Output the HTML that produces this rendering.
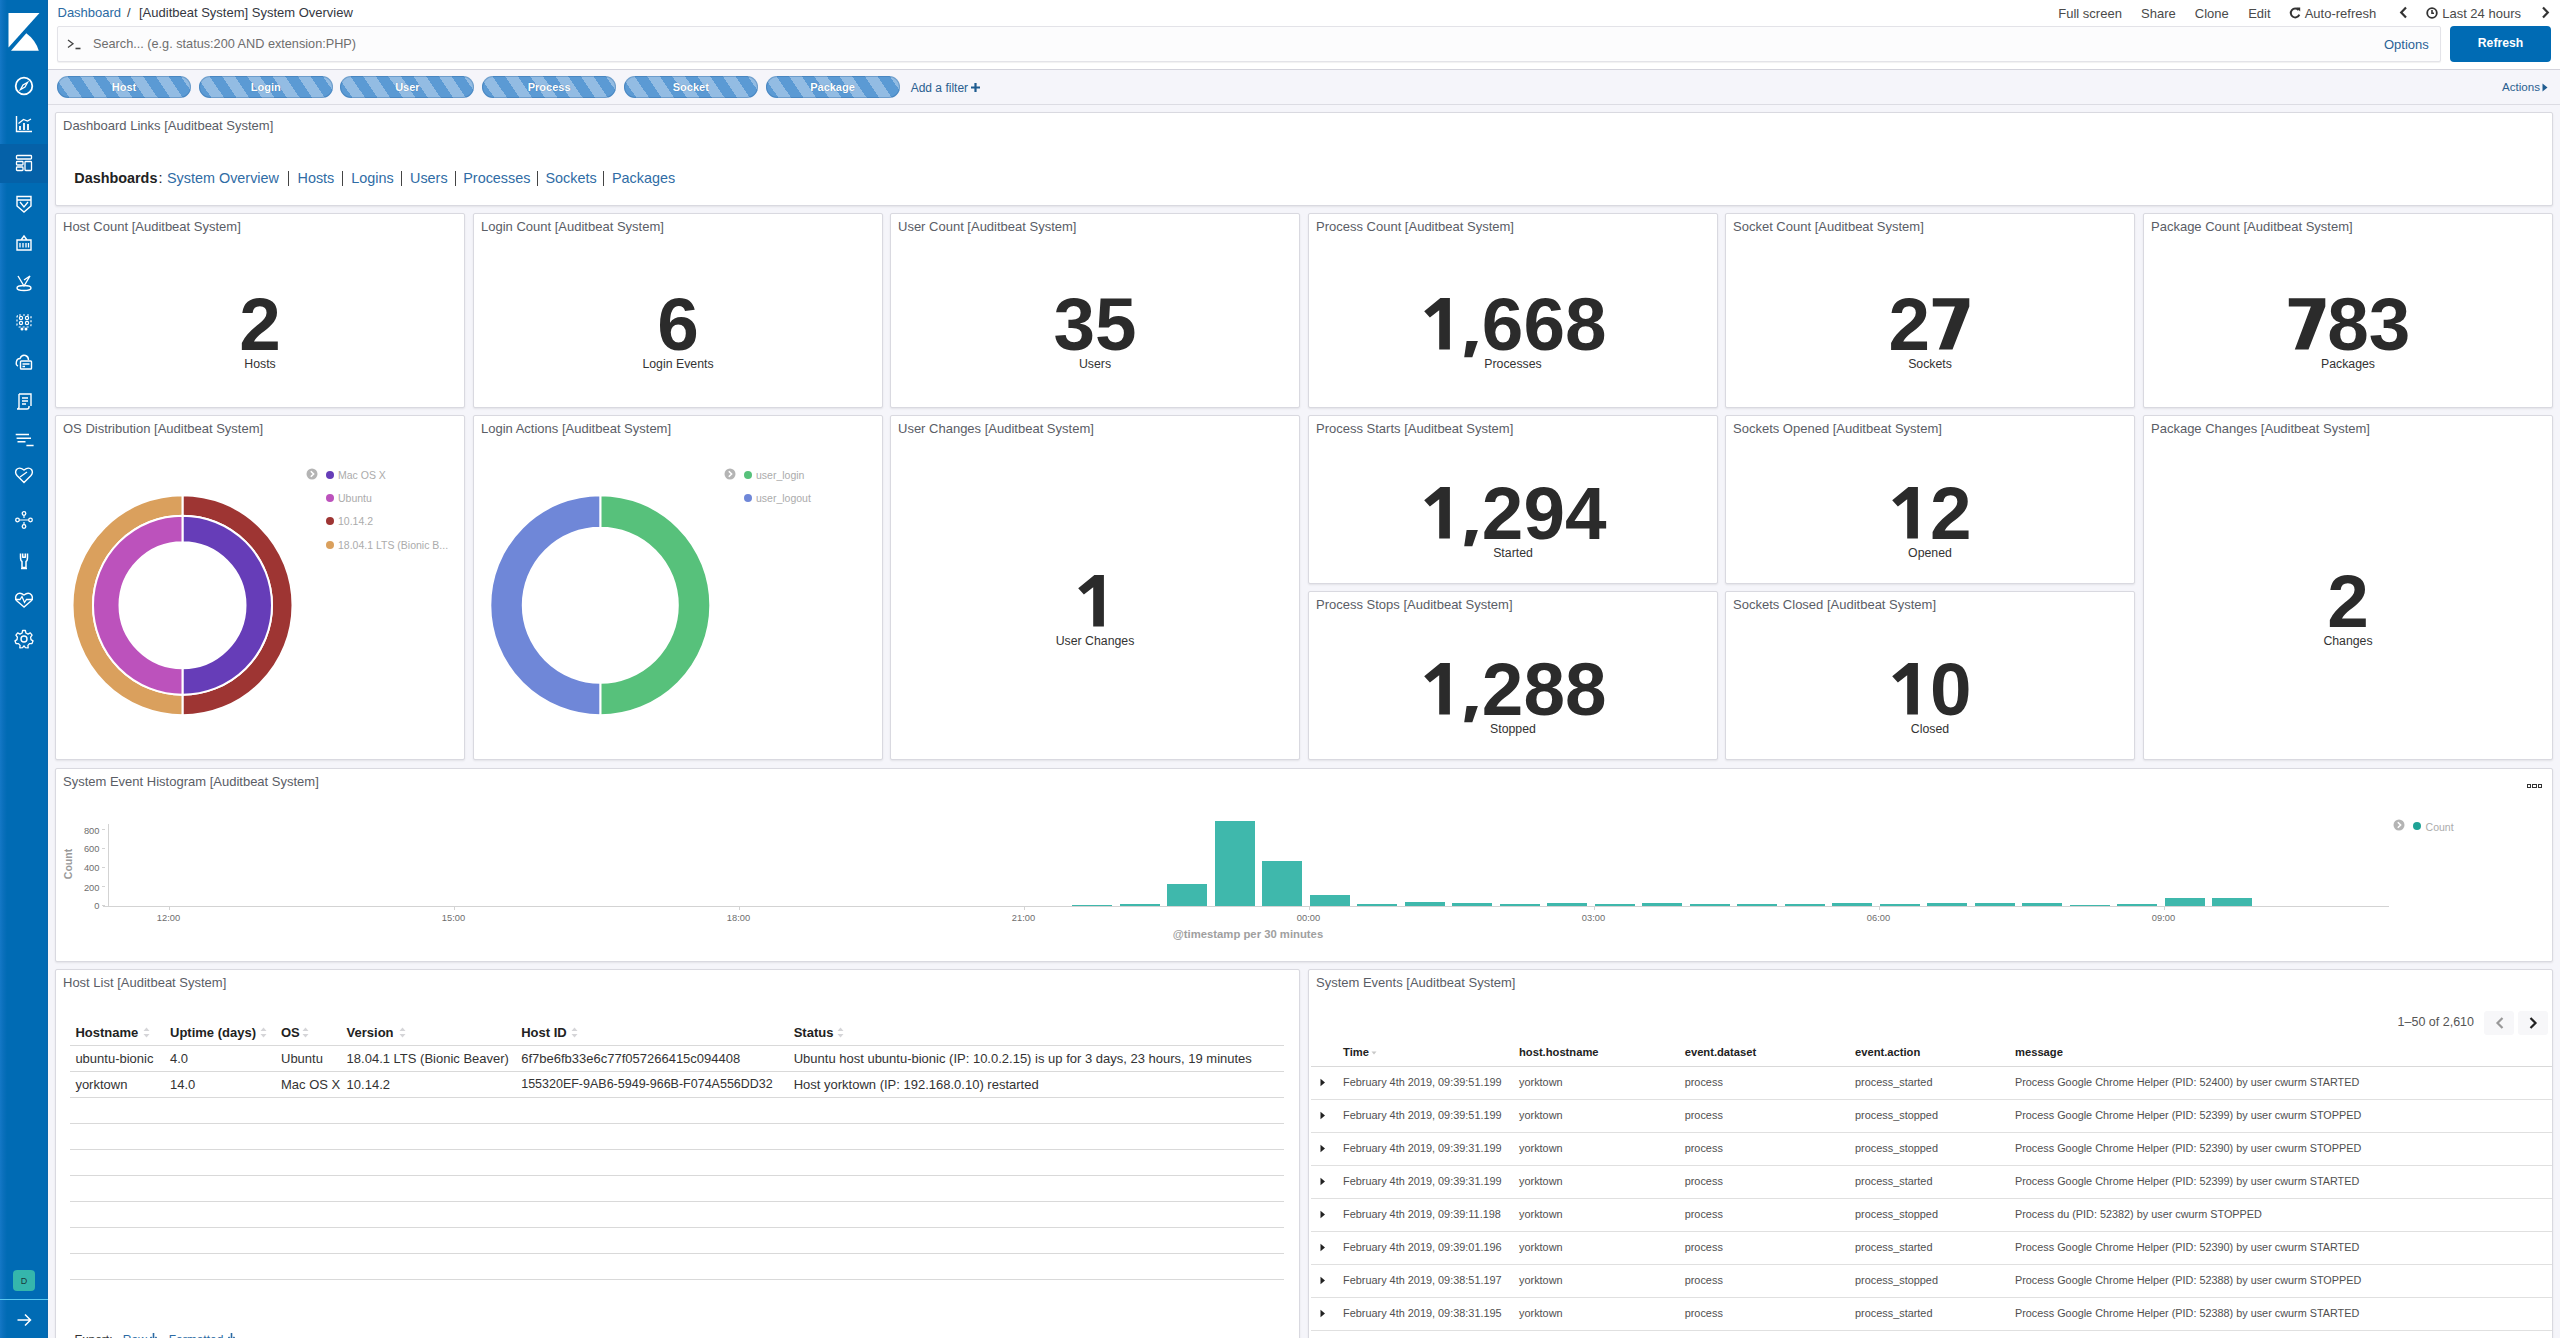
<!DOCTYPE html>
<html><head><meta charset="utf-8">
<style>
html,body{margin:0;padding:0;}
body{width:2560px;height:1338px;overflow:hidden;position:relative;background:#F5F5FA;font-family:"Liberation Sans", sans-serif;}
.t{position:absolute;white-space:nowrap;line-height:1;}
.r{position:absolute;box-sizing:border-box;}
.panel{position:absolute;box-sizing:border-box;background:#fff;border:1px solid #D9D9E0;border-radius:2px;box-shadow:0 1px 2px rgba(0,0,0,0.08);}
svg{position:absolute;overflow:visible;}
</style></head><body>
<div class="r" style="left:48px;top:0px;width:2512px;height:69px;background:#FFFFFF;"></div><div class="r" style="left:48px;top:69px;width:2512px;height:1px;background:#D3D3DC;"></div><div class="r" style="left:48px;top:70px;width:2512px;height:34px;background:#F5F5FA;"></div><div class="r" style="left:48px;top:104px;width:2512px;height:1px;background:#DCDCE3;"></div><div class="t" style="left:57.5px;top:6.00px;font-size:13px;font-weight:400;color:#2B6AA3;">Dashboard</div><div class="t" style="left:127px;top:6.00px;font-size:13px;font-weight:400;color:#343741;">/</div><div class="t" style="left:139px;top:6.00px;font-size:13px;font-weight:400;color:#343741;">[Auditbeat System] System Overview</div><div class="t" style="left:2058.3px;top:7.00px;font-size:13px;font-weight:400;color:#4A4A4A;">Full screen</div><div class="t" style="left:2141px;top:7.00px;font-size:13px;font-weight:400;color:#4A4A4A;">Share</div><div class="t" style="left:2194.8px;top:7.00px;font-size:13px;font-weight:400;color:#4A4A4A;">Clone</div><div class="t" style="left:2248.2px;top:7.00px;font-size:13px;font-weight:400;color:#4A4A4A;">Edit</div><svg style="left:2289px;top:7px" width="12" height="12" viewBox="0 0 12 12"><path d="M9.6 3.2 A4.4 4.4 0 1 0 10.3 7.6" fill="none" stroke="#333" stroke-width="2"/><path d="M7.2 0.6 L11.2 0.6 L11.2 4.6 Z" fill="#333"/></svg><div class="t" style="left:2304.7px;top:7.00px;font-size:13px;font-weight:400;color:#4A4A4A;">Auto-refresh</div><svg style="left:2399px;top:6px" width="9" height="13" viewBox="0 0 9 13"><path d="M7 1.5 L2.2 6.5 L7 11.5" fill="none" stroke="#333" stroke-width="2.2"/></svg><svg style="left:2426px;top:6.5px" width="12" height="12" viewBox="0 0 12 12"><circle cx="6" cy="6" r="4.8" fill="none" stroke="#333" stroke-width="1.8"/><path d="M6 3 V6.3 H8" fill="none" stroke="#333" stroke-width="1.6"/></svg><div class="t" style="left:2442.2px;top:7.00px;font-size:13px;font-weight:400;color:#4A4A4A;">Last 24 hours</div><svg style="left:2540.5px;top:5.5px" width="9" height="13" viewBox="0 0 9 13"><path d="M2 1.5 L6.8 6.5 L2 11.5" fill="none" stroke="#333" stroke-width="2.2"/></svg><div class="r" style="left:57px;top:26px;width:2384px;height:36px;background:#FCFCFD;border:1px solid #E3E3E8;border-radius:2px;box-shadow:0 1px 1px rgba(0,0,0,0.06);"></div><svg style="left:67px;top:39px" width="15" height="11" viewBox="0 0 15 11"><path d="M1 1 L6 4.8 L1 8.6" fill="none" stroke="#444" stroke-width="1.3"/><path d="M8.5 9.5 H13.5" stroke="#444" stroke-width="1.6"/></svg><div class="t" style="left:93px;top:37.95px;font-size:12.7px;font-weight:400;color:#6E6E6E;">Search... (e.g. status:200 AND extension:PHP)</div><div class="t" style="left:2384px;top:38.00px;font-size:13px;font-weight:400;color:#2B6296;">Options</div><div class="r" style="left:2450px;top:26px;width:101px;height:36px;background:#006BB4;border-radius:4px;"></div><div class="t" style="left:1900.5px;width:1200px;text-align:center;top:37.37px;font-size:12.2px;font-weight:700;color:#FFFFFF;">Refresh</div><div class="r" style="left:57.0px;top:76px;width:134px;height:22px;border-radius:11px;background:repeating-linear-gradient(56deg,#5B9AD4 0px,#5B9AD4 10.4px,#93BCE3 10.4px,#93BCE3 20.9px);box-shadow:inset 0 0 0 1px rgba(40,100,160,0.35);"></div><div class="t" style="left:-476.0px;width:1200px;text-align:center;top:82.19px;font-size:11px;font-weight:700;color:#FFFFFF;text-shadow:0 0 1px rgba(0,60,120,0.5);">Host</div><div class="r" style="left:198.7px;top:76px;width:134px;height:22px;border-radius:11px;background:repeating-linear-gradient(56deg,#5B9AD4 0px,#5B9AD4 10.4px,#93BCE3 10.4px,#93BCE3 20.9px);box-shadow:inset 0 0 0 1px rgba(40,100,160,0.35);"></div><div class="t" style="left:-334.3px;width:1200px;text-align:center;top:82.19px;font-size:11px;font-weight:700;color:#FFFFFF;text-shadow:0 0 1px rgba(0,60,120,0.5);">Login</div><div class="r" style="left:340.4px;top:76px;width:134px;height:22px;border-radius:11px;background:repeating-linear-gradient(56deg,#5B9AD4 0px,#5B9AD4 10.4px,#93BCE3 10.4px,#93BCE3 20.9px);box-shadow:inset 0 0 0 1px rgba(40,100,160,0.35);"></div><div class="t" style="left:-192.60000000000002px;width:1200px;text-align:center;top:82.19px;font-size:11px;font-weight:700;color:#FFFFFF;text-shadow:0 0 1px rgba(0,60,120,0.5);">User</div><div class="r" style="left:482.1px;top:76px;width:134px;height:22px;border-radius:11px;background:repeating-linear-gradient(56deg,#5B9AD4 0px,#5B9AD4 10.4px,#93BCE3 10.4px,#93BCE3 20.9px);box-shadow:inset 0 0 0 1px rgba(40,100,160,0.35);"></div><div class="t" style="left:-50.90000000000009px;width:1200px;text-align:center;top:82.19px;font-size:11px;font-weight:700;color:#FFFFFF;text-shadow:0 0 1px rgba(0,60,120,0.5);">Process</div><div class="r" style="left:623.8px;top:76px;width:134px;height:22px;border-radius:11px;background:repeating-linear-gradient(56deg,#5B9AD4 0px,#5B9AD4 10.4px,#93BCE3 10.4px,#93BCE3 20.9px);box-shadow:inset 0 0 0 1px rgba(40,100,160,0.35);"></div><div class="t" style="left:90.79999999999995px;width:1200px;text-align:center;top:82.19px;font-size:11px;font-weight:700;color:#FFFFFF;text-shadow:0 0 1px rgba(0,60,120,0.5);">Socket</div><div class="r" style="left:765.5px;top:76px;width:134px;height:22px;border-radius:11px;background:repeating-linear-gradient(56deg,#5B9AD4 0px,#5B9AD4 10.4px,#93BCE3 10.4px,#93BCE3 20.9px);box-shadow:inset 0 0 0 1px rgba(40,100,160,0.35);"></div><div class="t" style="left:232.5px;width:1200px;text-align:center;top:82.19px;font-size:11px;font-weight:700;color:#FFFFFF;text-shadow:0 0 1px rgba(0,60,120,0.5);">Package</div><div class="t" style="left:910.7px;top:81.84px;font-size:12px;font-weight:400;color:#2B5F90;">Add a filter</div><svg style="left:971px;top:82.5px" width="9" height="9" viewBox="0 0 9 9"><path d="M4.5 0 V9 M0 4.5 H9" stroke="#1F5C90" stroke-width="2.2"/></svg><div class="t" style="left:2502px;top:80.88px;font-size:11.6px;font-weight:400;color:#2B5F90;">Actions</div><svg style="left:2542px;top:82.5px" width="6" height="9" viewBox="0 0 6 9"><path d="M0.5 0.5 L5.5 4.5 L0.5 8.5 Z" fill="#1F5C90"/></svg><div class="r" style="left:0px;top:0px;width:48px;height:1338px;background:linear-gradient(90deg,#1478C6 0px,#0B70BC 3px,#006BB4 7px,#006BB4 46px,#0A64A8 48px);"></div><div class="r" style="left:0px;top:144px;width:48px;height:38.5px;background:#0561A8;"></div><svg style="left:0;top:0" width="48" height="56" viewBox="0 0 48 56"><path d="M8.5 13 H39.5 L8.5 47.5 Z" fill="#fff"/><path d="M11 50.8 L26.3 33.3 Q35.5 40 38.8 50.8 Z" fill="#fff"/></svg><svg style="left:14px;top:75.5px" width="20" height="20" viewBox="0 0 20 20"><circle cx="10" cy="10" r="8.3" fill="none" stroke="#fff" stroke-width="1.8"/><path d="M13.5 6.5 L11 11 L6.5 13.5 L9 9 Z" fill="none" stroke="#fff" stroke-width="1.3"/></svg><svg style="left:14px;top:113.5px" width="20" height="20" viewBox="0 0 20 20"><path d="M2.5 2 V17.5 H18" fill="none" stroke="#fff" stroke-width="1.4"/><path d="M4.5 9.5 L9.5 5.5 L13.5 7 L17 5" fill="none" stroke="#fff" stroke-width="1.3"/><path d="M6 12 V16 M10 9 V16 M14 10 V16" stroke="#fff" stroke-width="1.8"/></svg><svg style="left:14px;top:153px" width="20" height="20" viewBox="0 0 20 20"><rect x="2.5" y="2.5" width="15" height="3.5" rx="0.8" fill="none" stroke="#fff" stroke-width="1.3"/><rect x="2.5" y="8.5" width="6.5" height="3.5" rx="0.8" fill="none" stroke="#fff" stroke-width="1.3"/><rect x="2.5" y="14" width="6.5" height="3.5" rx="0.8" fill="none" stroke="#fff" stroke-width="1.3"/><rect x="11" y="8.5" width="6.5" height="9" rx="0.8" fill="none" stroke="#fff" stroke-width="1.3"/></svg><svg style="left:14px;top:193.5px" width="20" height="20" viewBox="0 0 20 20"><path d="M3 2.5 H17 V12 L10 18 L3 12 Z" fill="none" stroke="#fff" stroke-width="1.4"/><path d="M3 6 H17 M6 8 L10 13 L14 8" fill="none" stroke="#fff" stroke-width="1.3"/></svg><svg style="left:14px;top:232.5px" width="20" height="20" viewBox="0 0 20 20"><path d="M3 7 H17 V17 H3 Z M7 7 L10 3 L13 7" fill="none" stroke="#fff" stroke-width="1.4"/><path d="M6 10 V14.5 M9 10 V14.5 M12 10 V14.5 M14.5 10 V14.5" stroke="#fff" stroke-width="1.3"/></svg><svg style="left:14px;top:273px" width="20" height="20" viewBox="0 0 20 20"><path d="M4 3 L10 13 L16 3 L10 7" fill="none" stroke="#fff" stroke-width="1.4"/><ellipse cx="10" cy="15" rx="7" ry="2.5" fill="none" stroke="#fff" stroke-width="1.4"/></svg><svg style="left:14px;top:311.5px" width="20" height="20" viewBox="0 0 20 20"><rect x="3" y="3" width="14" height="12" rx="2" fill="none" stroke="#fff" stroke-width="1.2" stroke-dasharray="2 2"/><circle cx="7" cy="6" r="1.6" fill="none" stroke="#fff" stroke-width="1.2"/><circle cx="13" cy="6" r="1.6" fill="none" stroke="#fff" stroke-width="1.2"/><circle cx="7" cy="11" r="1.6" fill="none" stroke="#fff" stroke-width="1.2"/><circle cx="13" cy="11" r="1.6" fill="none" stroke="#fff" stroke-width="1.2"/><circle cx="8" cy="17" r="1.5" fill="#fff"/><circle cx="12" cy="17" r="1.5" fill="#fff"/></svg><svg style="left:14px;top:352px" width="20" height="20" viewBox="0 0 20 20"><path d="M4 14 Q1.5 13 2.5 9.5 Q3 6.5 6 6.5 Q7.5 2.5 11.5 3.5 Q14.5 4.5 14.5 8" fill="none" stroke="#fff" stroke-width="1.4"/><rect x="6.5" y="9" width="11" height="8" rx="0.8" fill="none" stroke="#fff" stroke-width="1.4"/><path d="M8.5 12 H15.5 M8.5 14.5 H11" stroke="#fff" stroke-width="1.3"/></svg><svg style="left:14px;top:390.5px" width="20" height="20" viewBox="0 0 20 20"><path d="M5 3 H17 V15 M5 3 V16 Q5 18 3 18 H13 Q15 18 15 16 V15" fill="none" stroke="#fff" stroke-width="1.4"/><path d="M8 7 H14 M8 10 H14 M8 13 H12" stroke="#fff" stroke-width="1.3"/></svg><svg style="left:14px;top:430px" width="20" height="20" viewBox="0 0 20 20"><path d="M1.7 4.5 H15 M2.6 8.2 H17 M3.5 11.8 H11.5 M12.4 15.5 H19.6" stroke="#fff" stroke-width="1.6"/></svg><svg style="left:14px;top:465px" width="20" height="20" viewBox="0 0 20 20"><path d="M10 17.5 L3 10.5 Q0.5 7.5 2.5 4.5 Q5.5 1.5 10 5 Q14.5 1.5 17.5 4.5 Q19.5 7.5 17 10.5 Z" fill="none" stroke="#fff" stroke-width="1.4"/><path d="M6 12 L13 7" stroke="#fff" stroke-width="1.2"/></svg><svg style="left:14px;top:509.5px" width="20" height="20" viewBox="0 0 20 20"><circle cx="10" cy="3.5" r="1.8" fill="none" stroke="#fff" stroke-width="1.3"/><circle cx="3.5" cy="10" r="1.8" fill="none" stroke="#fff" stroke-width="1.3"/><circle cx="16.5" cy="10" r="1.8" fill="none" stroke="#fff" stroke-width="1.3"/><circle cx="10" cy="16.5" r="1.8" fill="none" stroke="#fff" stroke-width="1.3"/><path d="M5.3 10 H14.7 M10 5.3 V8 M10 12 V14.7" stroke="#fff" stroke-width="1.2"/></svg><svg style="left:14px;top:550.5px" width="20" height="20" viewBox="0 0 20 20"><path d="M6.5 2.5 V6 Q6.5 9.8 8 10.5 V16.5 H12 V10.5 Q13.5 9.8 13.5 6 V2.5 M8.7 2.5 V6.3 H11.3 V2.5" fill="none" stroke="#fff" stroke-width="1.5" stroke-linejoin="round"/><path d="M7 17.5 H13" stroke="#fff" stroke-width="1.5"/></svg><svg style="left:14px;top:589.5px" width="20" height="20" viewBox="0 0 20 20"><path d="M10 17 L3 11 Q0.5 8 2.5 5 Q5.5 1.5 10 5 Q14.5 1.5 17.5 5 Q19.5 8 17 11 Z" fill="none" stroke="#fff" stroke-width="1.4"/><path d="M1 9.5 H6 L8 6.5 L10.5 12.5 L12.5 9.5 H19" fill="none" stroke="#fff" stroke-width="1.3"/></svg><svg style="left:14px;top:629px" width="20" height="20" viewBox="0 0 20 20"><circle cx="10" cy="10" r="3" fill="none" stroke="#fff" stroke-width="1.4"/><path d="M8.6 1.5 H11.4 L11.9 4 L14 5.1 L16.3 3.9 L18.1 6.1 L16.6 8.2 L17 10.6 L19 11.9 L18 14.6 L15.5 14.6 L13.9 16.4 L14.2 18.8 L11.4 18.6 L10 16.8 L8.6 18.6 L5.8 18.8 L6.1 16.4 L4.5 14.6 L2 14.6 L1 11.9 L3 10.6 L3.4 8.2 L1.9 6.1 L3.7 3.9 L6 5.1 L8.1 4 Z" fill="none" stroke="#fff" stroke-width="1.3" stroke-linejoin="round"/></svg><div class="r" style="left:13px;top:1270px;width:22px;height:21px;background:#35B6AC;border-radius:4px;"></div><div class="t" style="left:-576px;width:1200px;text-align:center;top:1277.38px;font-size:9px;font-weight:400;color:#1a3a3a;">D</div><div class="r" style="left:0px;top:1299px;width:48px;height:1px;background:#5BC8F0;"></div><svg style="left:14px;top:1309.5px" width="20" height="20" viewBox="0 0 20 20"><path d="M3.5 10 H16.5 M11 4.5 L16.5 10 L11 15.5" fill="none" stroke="#fff" stroke-width="1.5"/></svg><div class="panel" style="left:55px;top:112px;width:2498px;height:94px;"></div><div class="t" style="left:63px;top:118.70px;font-size:13px;font-weight:400;color:#5A5D66;">Dashboard Links [Auditbeat System]</div><div class="t" style="left:74.25px;top:170.71px;font-size:14.4px;font-weight:700;color:#222;">Dashboards</div><div class="t" style="left:158.5px;top:170.71px;font-size:14.4px;font-weight:400;color:#222;">:</div><div class="t" style="left:167px;top:170.71px;font-size:14.4px;font-weight:400;color:#2F6CA5;">System Overview</div><div class="t" style="left:297.5px;top:170.71px;font-size:14.4px;font-weight:400;color:#2F6CA5;">Hosts</div><div class="t" style="left:351.25px;top:170.71px;font-size:14.4px;font-weight:400;color:#2F6CA5;">Logins</div><div class="t" style="left:410px;top:170.71px;font-size:14.4px;font-weight:400;color:#2F6CA5;">Users</div><div class="t" style="left:463.25px;top:170.71px;font-size:14.4px;font-weight:400;color:#2F6CA5;">Processes</div><div class="t" style="left:545.5px;top:170.71px;font-size:14.4px;font-weight:400;color:#2F6CA5;">Sockets</div><div class="t" style="left:612px;top:170.71px;font-size:14.4px;font-weight:400;color:#2F6CA5;">Packages</div><div class="r" style="left:288.25px;top:171px;width:1px;height:15px;background:#444;"></div><div class="r" style="left:342.0px;top:171px;width:1px;height:15px;background:#444;"></div><div class="r" style="left:400.75px;top:171px;width:1px;height:15px;background:#444;"></div><div class="r" style="left:454.5px;top:171px;width:1px;height:15px;background:#444;"></div><div class="r" style="left:537.0px;top:171px;width:1px;height:15px;background:#444;"></div><div class="r" style="left:603.25px;top:171px;width:1px;height:15px;background:#444;"></div><div class="panel" style="left:55px;top:213px;width:410px;height:195px;"></div><div class="t" style="left:63px;top:219.70px;font-size:13px;font-weight:400;color:#5A5D66;">Host Count [Auditbeat System]</div><div class="t" style="left:-340.0px;width:1200px;text-align:center;top:287.27px;font-size:74.7px;font-weight:700;color:#2B2B2B;">2</div><div class="t" style="left:-340.0px;width:1200px;text-align:center;top:357.59px;font-size:12.3px;font-weight:400;color:#333333;">Hosts</div><div class="panel" style="left:473px;top:213px;width:410px;height:195px;"></div><div class="t" style="left:481px;top:219.70px;font-size:13px;font-weight:400;color:#5A5D66;">Login Count [Auditbeat System]</div><div class="t" style="left:78.0px;width:1200px;text-align:center;top:287.27px;font-size:74.7px;font-weight:700;color:#2B2B2B;">6</div><div class="t" style="left:78.0px;width:1200px;text-align:center;top:357.59px;font-size:12.3px;font-weight:400;color:#333333;">Login Events</div><div class="panel" style="left:890px;top:213px;width:410px;height:195px;"></div><div class="t" style="left:898px;top:219.70px;font-size:13px;font-weight:400;color:#5A5D66;">User Count [Auditbeat System]</div><div class="t" style="left:495.0px;width:1200px;text-align:center;top:287.27px;font-size:74.7px;font-weight:700;color:#2B2B2B;">35</div><div class="t" style="left:495.0px;width:1200px;text-align:center;top:357.59px;font-size:12.3px;font-weight:400;color:#333333;">Users</div><div class="panel" style="left:1308px;top:213px;width:410px;height:195px;"></div><div class="t" style="left:1316px;top:219.70px;font-size:13px;font-weight:400;color:#5A5D66;">Process Count [Auditbeat System]</div><div class="t" style="left:913.0px;width:1200px;text-align:center;top:287.27px;font-size:74.7px;font-weight:700;color:#2B2B2B;"><span style="position:relative;color:transparent">1<svg style="left:0;top:15.6px" width="42" height="52" viewBox="0 0 42 52"><path d="M29.9 0 V51.5 H19.2 V12.3 L9.9 19.6 L4.2 13.3 L20.4 0 Z" fill="#2B2B2B"/></svg></span><span style="position:relative;color:transparent">,<svg style="left:0;top:0" width="21" height="80" viewBox="0 0 21 80"><path d="M5.6 59 H16.9 L11.3 75.3 H3.2 Z" fill="#2B2B2B"/></svg></span>668</div><div class="t" style="left:913.0px;width:1200px;text-align:center;top:357.59px;font-size:12.3px;font-weight:400;color:#333333;">Processes</div><div class="panel" style="left:1725px;top:213px;width:410px;height:195px;"></div><div class="t" style="left:1733px;top:219.70px;font-size:13px;font-weight:400;color:#5A5D66;">Socket Count [Auditbeat System]</div><div class="t" style="left:1330.0px;width:1200px;text-align:center;top:287.27px;font-size:74.7px;font-weight:700;color:#2B2B2B;">2<span style="position:relative;color:transparent">7<svg style="left:0;top:15.6px" width="42" height="52" viewBox="0 0 42 52"><path d="M2.8 0.3 H39.3 V8.5 L22.5 51.5 H8.8 L24.9 8.5 H2.8 Z" fill="#2B2B2B"/></svg></span></div><div class="t" style="left:1330.0px;width:1200px;text-align:center;top:357.59px;font-size:12.3px;font-weight:400;color:#333333;">Sockets</div><div class="panel" style="left:2143px;top:213px;width:410px;height:195px;"></div><div class="t" style="left:2151px;top:219.70px;font-size:13px;font-weight:400;color:#5A5D66;">Package Count [Auditbeat System]</div><div class="t" style="left:1748.0px;width:1200px;text-align:center;top:287.27px;font-size:74.7px;font-weight:700;color:#2B2B2B;"><span style="position:relative;color:transparent">7<svg style="left:0;top:15.6px" width="42" height="52" viewBox="0 0 42 52"><path d="M2.8 0.3 H39.3 V8.5 L22.5 51.5 H8.8 L24.9 8.5 H2.8 Z" fill="#2B2B2B"/></svg></span>83</div><div class="t" style="left:1748.0px;width:1200px;text-align:center;top:357.59px;font-size:12.3px;font-weight:400;color:#333333;">Packages</div><div class="panel" style="left:890px;top:415px;width:410px;height:345px;"></div><div class="t" style="left:898px;top:421.70px;font-size:13px;font-weight:400;color:#5A5D66;">User Changes [Auditbeat System]</div><div class="t" style="left:495.0px;width:1200px;text-align:center;top:564.27px;font-size:74.7px;font-weight:700;color:#2B2B2B;"><span style="position:relative;color:transparent">1<svg style="left:0;top:15.6px" width="42" height="52" viewBox="0 0 42 52"><path d="M29.9 0 V51.5 H19.2 V12.3 L9.9 19.6 L4.2 13.3 L20.4 0 Z" fill="#2B2B2B"/></svg></span></div><div class="t" style="left:495.0px;width:1200px;text-align:center;top:634.59px;font-size:12.3px;font-weight:400;color:#333333;">User Changes</div><div class="panel" style="left:1308px;top:415px;width:410px;height:169px;"></div><div class="t" style="left:1316px;top:421.70px;font-size:13px;font-weight:400;color:#5A5D66;">Process Starts [Auditbeat System]</div><div class="t" style="left:913.0px;width:1200px;text-align:center;top:476.27px;font-size:74.7px;font-weight:700;color:#2B2B2B;"><span style="position:relative;color:transparent">1<svg style="left:0;top:15.6px" width="42" height="52" viewBox="0 0 42 52"><path d="M29.9 0 V51.5 H19.2 V12.3 L9.9 19.6 L4.2 13.3 L20.4 0 Z" fill="#2B2B2B"/></svg></span><span style="position:relative;color:transparent">,<svg style="left:0;top:0" width="21" height="80" viewBox="0 0 21 80"><path d="M5.6 59 H16.9 L11.3 75.3 H3.2 Z" fill="#2B2B2B"/></svg></span>294</div><div class="t" style="left:913.0px;width:1200px;text-align:center;top:546.59px;font-size:12.3px;font-weight:400;color:#333333;">Started</div><div class="panel" style="left:1725px;top:415px;width:410px;height:169px;"></div><div class="t" style="left:1733px;top:421.70px;font-size:13px;font-weight:400;color:#5A5D66;">Sockets Opened [Auditbeat System]</div><div class="t" style="left:1330.0px;width:1200px;text-align:center;top:476.27px;font-size:74.7px;font-weight:700;color:#2B2B2B;"><span style="position:relative;color:transparent">1<svg style="left:0;top:15.6px" width="42" height="52" viewBox="0 0 42 52"><path d="M29.9 0 V51.5 H19.2 V12.3 L9.9 19.6 L4.2 13.3 L20.4 0 Z" fill="#2B2B2B"/></svg></span>2</div><div class="t" style="left:1330.0px;width:1200px;text-align:center;top:546.59px;font-size:12.3px;font-weight:400;color:#333333;">Opened</div><div class="panel" style="left:1308px;top:591px;width:410px;height:169px;"></div><div class="t" style="left:1316px;top:597.70px;font-size:13px;font-weight:400;color:#5A5D66;">Process Stops [Auditbeat System]</div><div class="t" style="left:913.0px;width:1200px;text-align:center;top:652.27px;font-size:74.7px;font-weight:700;color:#2B2B2B;"><span style="position:relative;color:transparent">1<svg style="left:0;top:15.6px" width="42" height="52" viewBox="0 0 42 52"><path d="M29.9 0 V51.5 H19.2 V12.3 L9.9 19.6 L4.2 13.3 L20.4 0 Z" fill="#2B2B2B"/></svg></span><span style="position:relative;color:transparent">,<svg style="left:0;top:0" width="21" height="80" viewBox="0 0 21 80"><path d="M5.6 59 H16.9 L11.3 75.3 H3.2 Z" fill="#2B2B2B"/></svg></span>288</div><div class="t" style="left:913.0px;width:1200px;text-align:center;top:722.59px;font-size:12.3px;font-weight:400;color:#333333;">Stopped</div><div class="panel" style="left:1725px;top:591px;width:410px;height:169px;"></div><div class="t" style="left:1733px;top:597.70px;font-size:13px;font-weight:400;color:#5A5D66;">Sockets Closed [Auditbeat System]</div><div class="t" style="left:1330.0px;width:1200px;text-align:center;top:652.27px;font-size:74.7px;font-weight:700;color:#2B2B2B;"><span style="position:relative;color:transparent">1<svg style="left:0;top:15.6px" width="42" height="52" viewBox="0 0 42 52"><path d="M29.9 0 V51.5 H19.2 V12.3 L9.9 19.6 L4.2 13.3 L20.4 0 Z" fill="#2B2B2B"/></svg></span>0</div><div class="t" style="left:1330.0px;width:1200px;text-align:center;top:722.59px;font-size:12.3px;font-weight:400;color:#333333;">Closed</div><div class="panel" style="left:2143px;top:415px;width:410px;height:345px;"></div><div class="t" style="left:2151px;top:421.70px;font-size:13px;font-weight:400;color:#5A5D66;">Package Changes [Auditbeat System]</div><div class="t" style="left:1748.0px;width:1200px;text-align:center;top:564.27px;font-size:74.7px;font-weight:700;color:#2B2B2B;">2</div><div class="t" style="left:1748.0px;width:1200px;text-align:center;top:634.59px;font-size:12.3px;font-weight:400;color:#333333;">Changes</div><div class="panel" style="left:55px;top:415px;width:410px;height:345px;"></div><div class="t" style="left:63px;top:421.70px;font-size:13px;font-weight:400;color:#5A5D66;">OS Distribution [Auditbeat System]</div><div class="panel" style="left:473px;top:415px;width:410px;height:345px;"></div><div class="t" style="left:481px;top:421.70px;font-size:13px;font-weight:400;color:#5A5D66;">Login Actions [Auditbeat System]</div><svg style="left:0;top:0" width="2560" height="1338"><path d="M182.50 495.20 A110 110 0 0 1 182.50 715.20 L182.50 694.70 A89.5 89.5 0 0 0 182.50 515.70 Z" fill="#9E3533" stroke="#fff" stroke-width="2"/><path d="M182.50 715.20 A110 110 0 0 1 182.50 495.20 L182.50 515.70 A89.5 89.5 0 0 0 182.50 694.70 Z" fill="#DAA05D" stroke="#fff" stroke-width="2"/><path d="M182.50 515.70 A89.5 89.5 0 0 1 182.50 694.70 L182.50 668.20 A63 63 0 0 0 182.50 542.20 Z" fill="#663DB8" stroke="#fff" stroke-width="2"/><path d="M182.50 694.70 A89.5 89.5 0 0 1 182.50 515.70 L182.50 542.20 A63 63 0 0 0 182.50 668.20 Z" fill="#BC52BC" stroke="#fff" stroke-width="2"/><path d="M600.30 495.20 A110 110 0 0 1 600.30 715.20 L600.30 682.70 A77.5 77.5 0 0 0 600.30 527.70 Z" fill="#57C17B" stroke="#fff" stroke-width="2"/><path d="M600.30 715.20 A110 110 0 0 1 600.30 495.20 L600.30 527.70 A77.5 77.5 0 0 0 600.30 682.70 Z" fill="#6F87D8" stroke="#fff" stroke-width="2"/></svg><svg style="left:306px;top:467.5px" width="12" height="12" viewBox="0 0 12 12"><circle cx="6" cy="6" r="5.5" fill="#B4B4B4"/><path d="M4.8 3.2 L7.6 6 L4.8 8.8" fill="none" stroke="#fff" stroke-width="1.6"/></svg><div class="r" style="left:326px;top:470.8px;width:8px;height:8px;border-radius:50%;background:#663DB8;"></div><div class="t" style="left:338px;top:469.81px;font-size:10.5px;font-weight:400;color:#ABABAB;">Mac OS X</div><div class="r" style="left:326px;top:493.8px;width:8px;height:8px;border-radius:50%;background:#BC52BC;"></div><div class="t" style="left:338px;top:492.81px;font-size:10.5px;font-weight:400;color:#ABABAB;">Ubuntu</div><div class="r" style="left:326px;top:516.8px;width:8px;height:8px;border-radius:50%;background:#9E3533;"></div><div class="t" style="left:338px;top:515.81px;font-size:10.5px;font-weight:400;color:#ABABAB;">10.14.2</div><div class="r" style="left:326px;top:540.5px;width:8px;height:8px;border-radius:50%;background:#DAA05D;"></div><div class="t" style="left:338px;top:539.51px;font-size:10.5px;font-weight:400;color:#ABABAB;">18.04.1 LTS (Bionic B...</div><svg style="left:724px;top:467.5px" width="12" height="12" viewBox="0 0 12 12"><circle cx="6" cy="6" r="5.5" fill="#B4B4B4"/><path d="M4.8 3.2 L7.6 6 L4.8 8.8" fill="none" stroke="#fff" stroke-width="1.6"/></svg><div class="r" style="left:744px;top:470.8px;width:8px;height:8px;border-radius:50%;background:#57C17B;"></div><div class="t" style="left:756px;top:469.81px;font-size:10.5px;font-weight:400;color:#ABABAB;">user_login</div><div class="r" style="left:744px;top:493.8px;width:8px;height:8px;border-radius:50%;background:#6F87D8;"></div><div class="t" style="left:756px;top:492.81px;font-size:10.5px;font-weight:400;color:#ABABAB;">user_logout</div><div class="panel" style="left:55px;top:768px;width:2498px;height:194px;"></div><div class="t" style="left:63px;top:774.70px;font-size:13px;font-weight:400;color:#5A5D66;">System Event Histogram [Auditbeat System]</div><div class="r" style="left:108px;top:824px;width:1px;height:83px;background:#D3D3D3;"></div><div class="r" style="left:103px;top:906px;width:2286px;height:1px;background:#D3D3D3;"></div><div class="t" style="left:-1100.6px;width:1200px;text-align:right;top:826.53px;font-size:9.3px;font-weight:400;color:#6E6E6E;">800</div><div class="r" style="left:102px;top:829px;width:3px;height:1px;background:#D3D3D3;"></div><div class="t" style="left:-1100.6px;width:1200px;text-align:right;top:845.23px;font-size:9.3px;font-weight:400;color:#6E6E6E;">600</div><div class="r" style="left:102px;top:848px;width:3px;height:1px;background:#D3D3D3;"></div><div class="t" style="left:-1100.6px;width:1200px;text-align:right;top:864.33px;font-size:9.3px;font-weight:400;color:#6E6E6E;">400</div><div class="r" style="left:102px;top:867px;width:3px;height:1px;background:#D3D3D3;"></div><div class="t" style="left:-1100.6px;width:1200px;text-align:right;top:883.53px;font-size:9.3px;font-weight:400;color:#6E6E6E;">200</div><div class="r" style="left:102px;top:886px;width:3px;height:1px;background:#D3D3D3;"></div><div class="t" style="left:-1100.6px;width:1200px;text-align:right;top:902.23px;font-size:9.3px;font-weight:400;color:#6E6E6E;">0</div><div class="r" style="left:102px;top:905px;width:3px;height:1px;background:#D3D3D3;"></div><div class="t" style="left:28.400000000000006px;top:857.7px;width:80px;text-align:center;font-size:10.5px;font-weight:700;color:#999;transform:rotate(-90deg);line-height:12px;">Count</div><div class="t" style="left:-431.5px;width:1200px;text-align:center;top:913.63px;font-size:9.3px;font-weight:400;color:#6E6E6E;">12:00</div><div class="r" style="left:168.5px;top:906px;width:1px;height:4px;background:#D3D3D3;"></div><div class="t" style="left:-146.5px;width:1200px;text-align:center;top:913.63px;font-size:9.3px;font-weight:400;color:#6E6E6E;">15:00</div><div class="r" style="left:453.5px;top:906px;width:1px;height:4px;background:#D3D3D3;"></div><div class="t" style="left:138.5px;width:1200px;text-align:center;top:913.63px;font-size:9.3px;font-weight:400;color:#6E6E6E;">18:00</div><div class="r" style="left:738.5px;top:906px;width:1px;height:4px;background:#D3D3D3;"></div><div class="t" style="left:423.5px;width:1200px;text-align:center;top:913.63px;font-size:9.3px;font-weight:400;color:#6E6E6E;">21:00</div><div class="r" style="left:1023.5px;top:906px;width:1px;height:4px;background:#D3D3D3;"></div><div class="t" style="left:708.5px;width:1200px;text-align:center;top:913.63px;font-size:9.3px;font-weight:400;color:#6E6E6E;">00:00</div><div class="r" style="left:1308.5px;top:906px;width:1px;height:4px;background:#D3D3D3;"></div><div class="t" style="left:993.5px;width:1200px;text-align:center;top:913.63px;font-size:9.3px;font-weight:400;color:#6E6E6E;">03:00</div><div class="r" style="left:1593.5px;top:906px;width:1px;height:4px;background:#D3D3D3;"></div><div class="t" style="left:1278.5px;width:1200px;text-align:center;top:913.63px;font-size:9.3px;font-weight:400;color:#6E6E6E;">06:00</div><div class="r" style="left:1878.5px;top:906px;width:1px;height:4px;background:#D3D3D3;"></div><div class="t" style="left:1563.5px;width:1200px;text-align:center;top:913.63px;font-size:9.3px;font-weight:400;color:#6E6E6E;">09:00</div><div class="r" style="left:2163.5px;top:906px;width:1px;height:4px;background:#D3D3D3;"></div><div class="r" style="left:1072.0px;top:905.0px;width:40px;height:1.0px;background:#3FB8AC;"></div><div class="r" style="left:1119.5px;top:903.6px;width:40px;height:2.4px;background:#3FB8AC;"></div><div class="r" style="left:1167.0px;top:883.8px;width:40px;height:22.2px;background:#3FB8AC;"></div><div class="r" style="left:1214.5px;top:821.4px;width:40px;height:84.6px;background:#3FB8AC;"></div><div class="r" style="left:1262.0px;top:860.6px;width:40px;height:45.4px;background:#3FB8AC;"></div><div class="r" style="left:1309.5px;top:894.9px;width:40px;height:11.1px;background:#3FB8AC;"></div><div class="r" style="left:1357.0px;top:904.0px;width:40px;height:2.0px;background:#3FB8AC;"></div><div class="r" style="left:1404.5px;top:902.3px;width:40px;height:3.7px;background:#3FB8AC;"></div><div class="r" style="left:1452.0px;top:903.0px;width:40px;height:3.0px;background:#3FB8AC;"></div><div class="r" style="left:1499.5px;top:904.0px;width:40px;height:2.0px;background:#3FB8AC;"></div><div class="r" style="left:1547.0px;top:903.0px;width:40px;height:3.0px;background:#3FB8AC;"></div><div class="r" style="left:1594.5px;top:904.0px;width:40px;height:2.0px;background:#3FB8AC;"></div><div class="r" style="left:1642.0px;top:903.0px;width:40px;height:3.0px;background:#3FB8AC;"></div><div class="r" style="left:1689.5px;top:904.2px;width:40px;height:1.8px;background:#3FB8AC;"></div><div class="r" style="left:1737.0px;top:903.7px;width:40px;height:2.3px;background:#3FB8AC;"></div><div class="r" style="left:1784.5px;top:904.4px;width:40px;height:1.6px;background:#3FB8AC;"></div><div class="r" style="left:1832.0px;top:903.4px;width:40px;height:2.6px;background:#3FB8AC;"></div><div class="r" style="left:1879.5px;top:904.4px;width:40px;height:1.6px;background:#3FB8AC;"></div><div class="r" style="left:1927.0px;top:903.4px;width:40px;height:2.6px;background:#3FB8AC;"></div><div class="r" style="left:1974.5px;top:902.7px;width:40px;height:3.3px;background:#3FB8AC;"></div><div class="r" style="left:2022.0px;top:903.0px;width:40px;height:3.0px;background:#3FB8AC;"></div><div class="r" style="left:2069.5px;top:904.7px;width:40px;height:1.3px;background:#3FB8AC;"></div><div class="r" style="left:2117.0px;top:903.7px;width:40px;height:2.3px;background:#3FB8AC;"></div><div class="r" style="left:2164.5px;top:898.0px;width:40px;height:8.0px;background:#3FB8AC;"></div><div class="r" style="left:2212.0px;top:898.0px;width:40px;height:8.0px;background:#3FB8AC;"></div><div class="t" style="left:648px;width:1200px;text-align:center;top:928.93px;font-size:11.3px;font-weight:700;color:#A0A0A0;">@timestamp per 30 minutes</div><svg style="left:2392.7px;top:819.4px" width="12" height="12" viewBox="0 0 12 12"><circle cx="6" cy="6" r="5.5" fill="#B4B4B4"/><path d="M4.8 3.2 L7.6 6 L4.8 8.8" fill="none" stroke="#fff" stroke-width="1.6"/></svg><div class="r" style="left:2413px;top:822px;width:8px;height:8px;border-radius:50%;background:#1FA396;"></div><div class="t" style="left:2425.6px;top:821.91px;font-size:10.5px;font-weight:400;color:#ABABAB;">Count</div><div class="r" style="left:2526.5px;top:783.5px;width:4.5px;height:4.5px;border:1.2px solid #333;"></div><div class="r" style="left:2532.0px;top:783.5px;width:4.5px;height:4.5px;border:1.2px solid #333;"></div><div class="r" style="left:2537.5px;top:783.5px;width:4.5px;height:4.5px;border:1.2px solid #333;"></div><div class="panel" style="left:55px;top:969px;width:1245px;height:420px;"></div><div class="t" style="left:63px;top:975.70px;font-size:13px;font-weight:400;color:#5A5D66;">Host List [Auditbeat System]</div><div class="t" style="left:75.4px;top:1025.60px;font-size:13px;font-weight:700;color:#222;">Hostname</div><svg style="left:142.7px;top:1027px" width="7" height="11" viewBox="0 0 7 11"><path d="M3.5 0.5 L6.5 4 H0.5 Z M3.5 10.5 L6.5 7 H0.5 Z" fill="#D5D5D8"/></svg><div class="t" style="left:170px;top:1025.60px;font-size:13px;font-weight:700;color:#222;">Uptime (days)</div><svg style="left:260.0px;top:1027px" width="7" height="11" viewBox="0 0 7 11"><path d="M3.5 0.5 L6.5 4 H0.5 Z M3.5 10.5 L6.5 7 H0.5 Z" fill="#D5D5D8"/></svg><div class="t" style="left:281px;top:1025.60px;font-size:13px;font-weight:700;color:#222;">OS</div><svg style="left:301.5px;top:1027px" width="7" height="11" viewBox="0 0 7 11"><path d="M3.5 0.5 L6.5 4 H0.5 Z M3.5 10.5 L6.5 7 H0.5 Z" fill="#D5D5D8"/></svg><div class="t" style="left:346.6px;top:1025.60px;font-size:13px;font-weight:700;color:#222;">Version</div><svg style="left:398.5px;top:1027px" width="7" height="11" viewBox="0 0 7 11"><path d="M3.5 0.5 L6.5 4 H0.5 Z M3.5 10.5 L6.5 7 H0.5 Z" fill="#D5D5D8"/></svg><div class="t" style="left:521.2px;top:1025.60px;font-size:13px;font-weight:700;color:#222;">Host ID</div><svg style="left:570.5px;top:1027px" width="7" height="11" viewBox="0 0 7 11"><path d="M3.5 0.5 L6.5 4 H0.5 Z M3.5 10.5 L6.5 7 H0.5 Z" fill="#D5D5D8"/></svg><div class="t" style="left:793.7px;top:1025.60px;font-size:13px;font-weight:700;color:#222;">Status</div><svg style="left:837.0px;top:1027px" width="7" height="11" viewBox="0 0 7 11"><path d="M3.5 0.5 L6.5 4 H0.5 Z M3.5 10.5 L6.5 7 H0.5 Z" fill="#D5D5D8"/></svg><div class="t" style="left:75.4px;top:1051.90px;font-size:13px;font-weight:400;color:#333;">ubuntu-bionic</div><div class="t" style="left:170px;top:1051.90px;font-size:13px;font-weight:400;color:#333;">4.0</div><div class="t" style="left:281px;top:1051.90px;font-size:13px;font-weight:400;color:#333;">Ubuntu</div><div class="t" style="left:346.6px;top:1051.90px;font-size:13px;font-weight:400;color:#333;">18.04.1 LTS (Bionic Beaver)</div><div class="t" style="left:521.2px;top:1051.90px;font-size:13px;font-weight:400;color:#333;">6f7be6fb33e6c77f057266415c094408</div><div class="t" style="left:793.7px;top:1051.90px;font-size:13px;font-weight:400;color:#333;">Ubuntu host ubuntu-bionic (IP: 10.0.2.15) is up for 3 days, 23 hours, 19 minutes</div><div class="t" style="left:75.4px;top:1077.80px;font-size:13px;font-weight:400;color:#333;">yorktown</div><div class="t" style="left:170px;top:1077.80px;font-size:13px;font-weight:400;color:#333;">14.0</div><div class="t" style="left:281px;top:1077.80px;font-size:13px;font-weight:400;color:#333;">Mac OS X</div><div class="t" style="left:346.6px;top:1077.80px;font-size:13px;font-weight:400;color:#333;">10.14.2</div><div class="t" style="left:521.2px;top:1078.22px;font-size:12.5px;font-weight:400;color:#333;">155320EF-9AB6-5949-966B-F074A556DD32</div><div class="t" style="left:793.7px;top:1077.80px;font-size:13px;font-weight:400;color:#333;">Host yorktown (IP: 192.168.0.10) restarted</div><div class="r" style="left:70px;top:1045px;width:1214px;height:1px;background:#D9D9D9;"></div><div class="r" style="left:70px;top:1071px;width:1214px;height:1px;background:#D9D9D9;"></div><div class="r" style="left:70px;top:1097px;width:1214px;height:1px;background:#D9D9D9;"></div><div class="r" style="left:70px;top:1123px;width:1214px;height:1px;background:#D9D9D9;"></div><div class="r" style="left:70px;top:1149px;width:1214px;height:1px;background:#D9D9D9;"></div><div class="r" style="left:70px;top:1175px;width:1214px;height:1px;background:#D9D9D9;"></div><div class="r" style="left:70px;top:1201px;width:1214px;height:1px;background:#D9D9D9;"></div><div class="r" style="left:70px;top:1227px;width:1214px;height:1px;background:#D9D9D9;"></div><div class="r" style="left:70px;top:1253px;width:1214px;height:1px;background:#D9D9D9;"></div><div class="r" style="left:70px;top:1279px;width:1214px;height:1px;background:#D9D9D9;"></div><div class="t" style="left:74.5px;top:1334.14px;font-size:12px;font-weight:400;color:#333;">Export:</div><div class="t" style="left:122.8px;top:1334.14px;font-size:12px;font-weight:400;color:#2B6AA3;">Raw</div><div class="t" style="left:168.7px;top:1334.14px;font-size:12px;font-weight:400;color:#2B6AA3;">Formatted</div><svg style="left:149.5px;top:1333px" width="7" height="10" viewBox="0 0 7 10"><path d="M3.5 0 V6 M0.5 4 L3.5 7.5 L6.5 4 M0 9.5 H7" fill="none" stroke="#2B6AA3" stroke-width="1.6"/></svg><svg style="left:227.8px;top:1333px" width="7" height="10" viewBox="0 0 7 10"><path d="M3.5 0 V6 M0.5 4 L3.5 7.5 L6.5 4 M0 9.5 H7" fill="none" stroke="#2B6AA3" stroke-width="1.6"/></svg><div class="panel" style="left:1308px;top:969px;width:1245px;height:420px;"></div><div class="t" style="left:1316px;top:975.70px;font-size:13px;font-weight:400;color:#5A5D66;">System Events [Auditbeat System]</div><div class="t" style="left:1274px;width:1200px;text-align:right;top:1015.82px;font-size:12.5px;font-weight:400;color:#555;">1–50 of 2,610</div><div class="r" style="left:2484px;top:1011px;width:30px;height:24px;background:#F7F7F9;border-radius:3px;"></div><div class="r" style="left:2518px;top:1011px;width:30px;height:24px;background:#F7F7F9;border-radius:3px;"></div><svg style="left:2495px;top:1016px" width="10" height="14" viewBox="0 0 10 14"><path d="M7.5 2 L2.5 7 L7.5 12" fill="none" stroke="#999" stroke-width="2.2"/></svg><svg style="left:2528px;top:1016px" width="10" height="14" viewBox="0 0 10 14"><path d="M2.5 2 L7.5 7 L2.5 12" fill="none" stroke="#222" stroke-width="2.2"/></svg><div class="t" style="left:1343px;top:1046.52px;font-size:11.2px;font-weight:700;color:#222;">Time</div><div class="t" style="left:1519px;top:1046.52px;font-size:11.2px;font-weight:700;color:#222;">host.hostname</div><div class="t" style="left:1684.7px;top:1046.52px;font-size:11.2px;font-weight:700;color:#222;">event.dataset</div><div class="t" style="left:1855px;top:1046.52px;font-size:11.2px;font-weight:700;color:#222;">event.action</div><div class="t" style="left:2015px;top:1046.52px;font-size:11.2px;font-weight:700;color:#222;">message</div><svg style="left:1371px;top:1050px" width="6" height="6" viewBox="0 0 6 6"><path d="M0.5 1.5 H5.5 L3 4.5 Z" fill="#C8C8C8"/></svg><div class="r" style="left:1311px;top:1066px;width:1241px;height:1px;background:#D9D9D9;"></div><svg style="left:1319.5px;top:1077.8px" width="6" height="9" viewBox="0 0 6 9"><path d="M0.5 0.8 L5 4.5 L0.5 8.2 Z" fill="#222"/></svg><div class="t" style="left:1343px;top:1077.07px;font-size:10.9px;font-weight:400;color:#505050;">February 4th 2019, 09:39:51.199</div><div class="t" style="left:1519px;top:1077.07px;font-size:10.9px;font-weight:400;color:#505050;">yorktown</div><div class="t" style="left:1684.7px;top:1077.07px;font-size:10.9px;font-weight:400;color:#505050;">process</div><div class="t" style="left:1855px;top:1077.07px;font-size:10.9px;font-weight:400;color:#505050;">process_started</div><div class="t" style="left:2015px;top:1077.12px;font-size:10.85px;font-weight:400;color:#505050;">Process Google Chrome Helper (PID: 52400) by user cwurm STARTED</div><div class="r" style="left:1311px;top:1099px;width:1241px;height:1px;background:#E0E0E0;"></div><svg style="left:1319.5px;top:1110.8px" width="6" height="9" viewBox="0 0 6 9"><path d="M0.5 0.8 L5 4.5 L0.5 8.2 Z" fill="#222"/></svg><div class="t" style="left:1343px;top:1110.07px;font-size:10.9px;font-weight:400;color:#505050;">February 4th 2019, 09:39:51.199</div><div class="t" style="left:1519px;top:1110.07px;font-size:10.9px;font-weight:400;color:#505050;">yorktown</div><div class="t" style="left:1684.7px;top:1110.07px;font-size:10.9px;font-weight:400;color:#505050;">process</div><div class="t" style="left:1855px;top:1110.07px;font-size:10.9px;font-weight:400;color:#505050;">process_stopped</div><div class="t" style="left:2015px;top:1110.12px;font-size:10.85px;font-weight:400;color:#505050;">Process Google Chrome Helper (PID: 52399) by user cwurm STOPPED</div><div class="r" style="left:1311px;top:1132px;width:1241px;height:1px;background:#E0E0E0;"></div><svg style="left:1319.5px;top:1143.8px" width="6" height="9" viewBox="0 0 6 9"><path d="M0.5 0.8 L5 4.5 L0.5 8.2 Z" fill="#222"/></svg><div class="t" style="left:1343px;top:1143.07px;font-size:10.9px;font-weight:400;color:#505050;">February 4th 2019, 09:39:31.199</div><div class="t" style="left:1519px;top:1143.07px;font-size:10.9px;font-weight:400;color:#505050;">yorktown</div><div class="t" style="left:1684.7px;top:1143.07px;font-size:10.9px;font-weight:400;color:#505050;">process</div><div class="t" style="left:1855px;top:1143.07px;font-size:10.9px;font-weight:400;color:#505050;">process_stopped</div><div class="t" style="left:2015px;top:1143.12px;font-size:10.85px;font-weight:400;color:#505050;">Process Google Chrome Helper (PID: 52390) by user cwurm STOPPED</div><div class="r" style="left:1311px;top:1165px;width:1241px;height:1px;background:#E0E0E0;"></div><svg style="left:1319.5px;top:1176.8px" width="6" height="9" viewBox="0 0 6 9"><path d="M0.5 0.8 L5 4.5 L0.5 8.2 Z" fill="#222"/></svg><div class="t" style="left:1343px;top:1176.07px;font-size:10.9px;font-weight:400;color:#505050;">February 4th 2019, 09:39:31.199</div><div class="t" style="left:1519px;top:1176.07px;font-size:10.9px;font-weight:400;color:#505050;">yorktown</div><div class="t" style="left:1684.7px;top:1176.07px;font-size:10.9px;font-weight:400;color:#505050;">process</div><div class="t" style="left:1855px;top:1176.07px;font-size:10.9px;font-weight:400;color:#505050;">process_started</div><div class="t" style="left:2015px;top:1176.12px;font-size:10.85px;font-weight:400;color:#505050;">Process Google Chrome Helper (PID: 52399) by user cwurm STARTED</div><div class="r" style="left:1311px;top:1198px;width:1241px;height:1px;background:#E0E0E0;"></div><svg style="left:1319.5px;top:1209.8px" width="6" height="9" viewBox="0 0 6 9"><path d="M0.5 0.8 L5 4.5 L0.5 8.2 Z" fill="#222"/></svg><div class="t" style="left:1343px;top:1209.07px;font-size:10.9px;font-weight:400;color:#505050;">February 4th 2019, 09:39:11.198</div><div class="t" style="left:1519px;top:1209.07px;font-size:10.9px;font-weight:400;color:#505050;">yorktown</div><div class="t" style="left:1684.7px;top:1209.07px;font-size:10.9px;font-weight:400;color:#505050;">process</div><div class="t" style="left:1855px;top:1209.07px;font-size:10.9px;font-weight:400;color:#505050;">process_stopped</div><div class="t" style="left:2015px;top:1209.12px;font-size:10.85px;font-weight:400;color:#505050;">Process du (PID: 52382) by user cwurm STOPPED</div><div class="r" style="left:1311px;top:1231px;width:1241px;height:1px;background:#E0E0E0;"></div><svg style="left:1319.5px;top:1242.8px" width="6" height="9" viewBox="0 0 6 9"><path d="M0.5 0.8 L5 4.5 L0.5 8.2 Z" fill="#222"/></svg><div class="t" style="left:1343px;top:1242.07px;font-size:10.9px;font-weight:400;color:#505050;">February 4th 2019, 09:39:01.196</div><div class="t" style="left:1519px;top:1242.07px;font-size:10.9px;font-weight:400;color:#505050;">yorktown</div><div class="t" style="left:1684.7px;top:1242.07px;font-size:10.9px;font-weight:400;color:#505050;">process</div><div class="t" style="left:1855px;top:1242.07px;font-size:10.9px;font-weight:400;color:#505050;">process_started</div><div class="t" style="left:2015px;top:1242.12px;font-size:10.85px;font-weight:400;color:#505050;">Process Google Chrome Helper (PID: 52390) by user cwurm STARTED</div><div class="r" style="left:1311px;top:1264px;width:1241px;height:1px;background:#E0E0E0;"></div><svg style="left:1319.5px;top:1275.8px" width="6" height="9" viewBox="0 0 6 9"><path d="M0.5 0.8 L5 4.5 L0.5 8.2 Z" fill="#222"/></svg><div class="t" style="left:1343px;top:1275.07px;font-size:10.9px;font-weight:400;color:#505050;">February 4th 2019, 09:38:51.197</div><div class="t" style="left:1519px;top:1275.07px;font-size:10.9px;font-weight:400;color:#505050;">yorktown</div><div class="t" style="left:1684.7px;top:1275.07px;font-size:10.9px;font-weight:400;color:#505050;">process</div><div class="t" style="left:1855px;top:1275.07px;font-size:10.9px;font-weight:400;color:#505050;">process_stopped</div><div class="t" style="left:2015px;top:1275.12px;font-size:10.85px;font-weight:400;color:#505050;">Process Google Chrome Helper (PID: 52388) by user cwurm STOPPED</div><div class="r" style="left:1311px;top:1297px;width:1241px;height:1px;background:#E0E0E0;"></div><svg style="left:1319.5px;top:1308.8px" width="6" height="9" viewBox="0 0 6 9"><path d="M0.5 0.8 L5 4.5 L0.5 8.2 Z" fill="#222"/></svg><div class="t" style="left:1343px;top:1308.07px;font-size:10.9px;font-weight:400;color:#505050;">February 4th 2019, 09:38:31.195</div><div class="t" style="left:1519px;top:1308.07px;font-size:10.9px;font-weight:400;color:#505050;">yorktown</div><div class="t" style="left:1684.7px;top:1308.07px;font-size:10.9px;font-weight:400;color:#505050;">process</div><div class="t" style="left:1855px;top:1308.07px;font-size:10.9px;font-weight:400;color:#505050;">process_started</div><div class="t" style="left:2015px;top:1308.12px;font-size:10.85px;font-weight:400;color:#505050;">Process Google Chrome Helper (PID: 52388) by user cwurm STARTED</div><div class="r" style="left:1311px;top:1330px;width:1241px;height:1px;background:#E0E0E0;"></div></body></html>
